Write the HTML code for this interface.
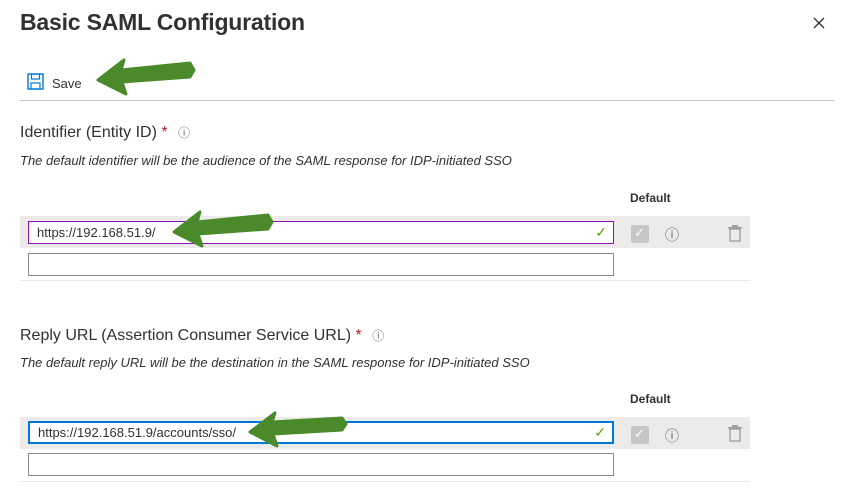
<!DOCTYPE html>
<html><head><style>
body{margin:0;width:852px;height:498px;background:#fff;font-family:"Liberation Sans",sans-serif;color:#323130;position:relative;overflow:hidden}
.a{position:absolute}
.t{font-size:23px;font-weight:bold;left:20px;top:9px;letter-spacing:-0.2px;color:#323130}
.lbl{font-size:16px;color:#323130}
.it{font-size:13px;font-style:italic;color:#323130}
.row{position:absolute;left:20px;width:730px;height:32px;background:#edebe9}
.inp{position:absolute;left:28px;width:584px;height:21px;border:1px solid #8a8886;background:#fff;font-size:13px;line-height:21px;box-sizing:content-box}
.inp span{padding-left:8px}
.sep{position:absolute;left:20px;width:730px;height:1px;background:#edebe9}
.cb{position:absolute;left:631px;width:18px;height:18px;background:#c8c6c4;border-radius:2px}
.ck{position:absolute;right:6px;top:0;color:#57a300;font-size:14px}
</style></head><body>
<div class="a t">Basic SAML Configuration</div>
<svg class="a" style="left:813px;top:17px" width="12" height="12"><path d="M1 1L11 11M11 1L1 11" stroke="#323130" stroke-width="1.3"/></svg>
<svg class="a" style="left:27px;top:73px" width="17" height="17" viewBox="0 0 17 17"><rect x="1" y="1" width="15" height="15" fill="none" stroke="#0078d4" stroke-width="1.4"/><rect x="4.5" y="1" width="8" height="5" fill="none" stroke="#0078d4" stroke-width="1.2"/><rect x="4" y="10" width="9" height="6" fill="none" stroke="#0078d4" stroke-width="1.2"/></svg>
<div class="a" style="left:52px;top:76px;font-size:13px">Save</div>
<div class="a" style="left:20px;top:100px;width:815px;height:1px;background:#c8c6c4"></div>

<div class="a lbl" style="left:20px;top:124px">Identifier (Entity ID) <span style="color:#a4262c">*</span> <span style="font-size:12px;color:#605e5c;margin-left:6px">ⓘ</span></div>
<div class="a it" style="left:20px;top:153px">The default identifier will be the audience of the SAML response for IDP-initiated SSO</div>
<div class="a" style="left:630px;top:191px;font-size:12px;font-weight:bold">Default</div>
<div class="row" style="top:216px"></div>
<div class="inp" style="top:221px;border-color:#8f10b6"><span>https://192.168.51.9/</span><div class="ck">✓</div></div>
<div class="cb" style="top:225px"></div><div class="a" style="left:634px;top:225px;color:#fff;font-size:13px">✓</div>
<div class="a" style="left:665px;top:225px;font-size:14px;color:#605e5c">ⓘ</div>
<svg class="a" style="left:728px;top:225px" width="14" height="17" viewBox="0 0 14 17"><rect x="0" y="2" width="14" height="1.5" fill="#a19f9d"/><rect x="4" y="0" width="6" height="2" fill="#a19f9d"/><rect x="2" y="4" width="10" height="12" fill="none" stroke="#a19f9d" stroke-width="1.4"/></svg>
<div class="inp" style="top:253px"></div>
<div class="sep" style="top:280px"></div>

<div class="a lbl" style="left:20px;top:327px">Reply URL (Assertion Consumer Service URL) <span style="color:#a4262c">*</span> <span style="font-size:12px;color:#605e5c;margin-left:6px">ⓘ</span></div>
<div class="a it" style="left:20px;top:355px">The default reply URL will be the destination in the SAML response for IDP-initiated SSO</div>
<div class="a" style="left:630px;top:392px;font-size:12px;font-weight:bold">Default</div>
<div class="row" style="top:417px"></div>
<div class="inp" style="top:421px;border:2px solid #0078d4;height:19px;width:582px;line-height:19px"><span>https://192.168.51.9/accounts/sso/</span><div class="ck">✓</div></div>
<div class="cb" style="top:426px"></div><div class="a" style="left:634px;top:426px;color:#fff;font-size:13px">✓</div>
<div class="a" style="left:665px;top:426px;font-size:14px;color:#605e5c">ⓘ</div>
<svg class="a" style="left:728px;top:425px" width="14" height="17" viewBox="0 0 14 17"><rect x="0" y="2" width="14" height="1.5" fill="#a19f9d"/><rect x="4" y="0" width="6" height="2" fill="#a19f9d"/><rect x="2" y="4" width="10" height="12" fill="none" stroke="#a19f9d" stroke-width="1.4"/></svg>
<div class="inp" style="top:453px"></div>
<div class="sep" style="top:481px"></div>

<svg class="a" style="left:0;top:0" width="852" height="498">
<g fill="#4a8a2a" stroke="#4a8a2a" stroke-width="3" stroke-linejoin="round">
<polygon points="98,80 124,60 121,70 190,63 194,70 190,77 122,82 126,94"/>
<polygon points="174,232 200,212 197,222 268,215 272,222 268,229 198,234 202,246"/>
<polygon points="250,432 275,413 272,422 342,418 346,424 342,430 273,434 277,446"/>
</g></svg>
</body></html>
